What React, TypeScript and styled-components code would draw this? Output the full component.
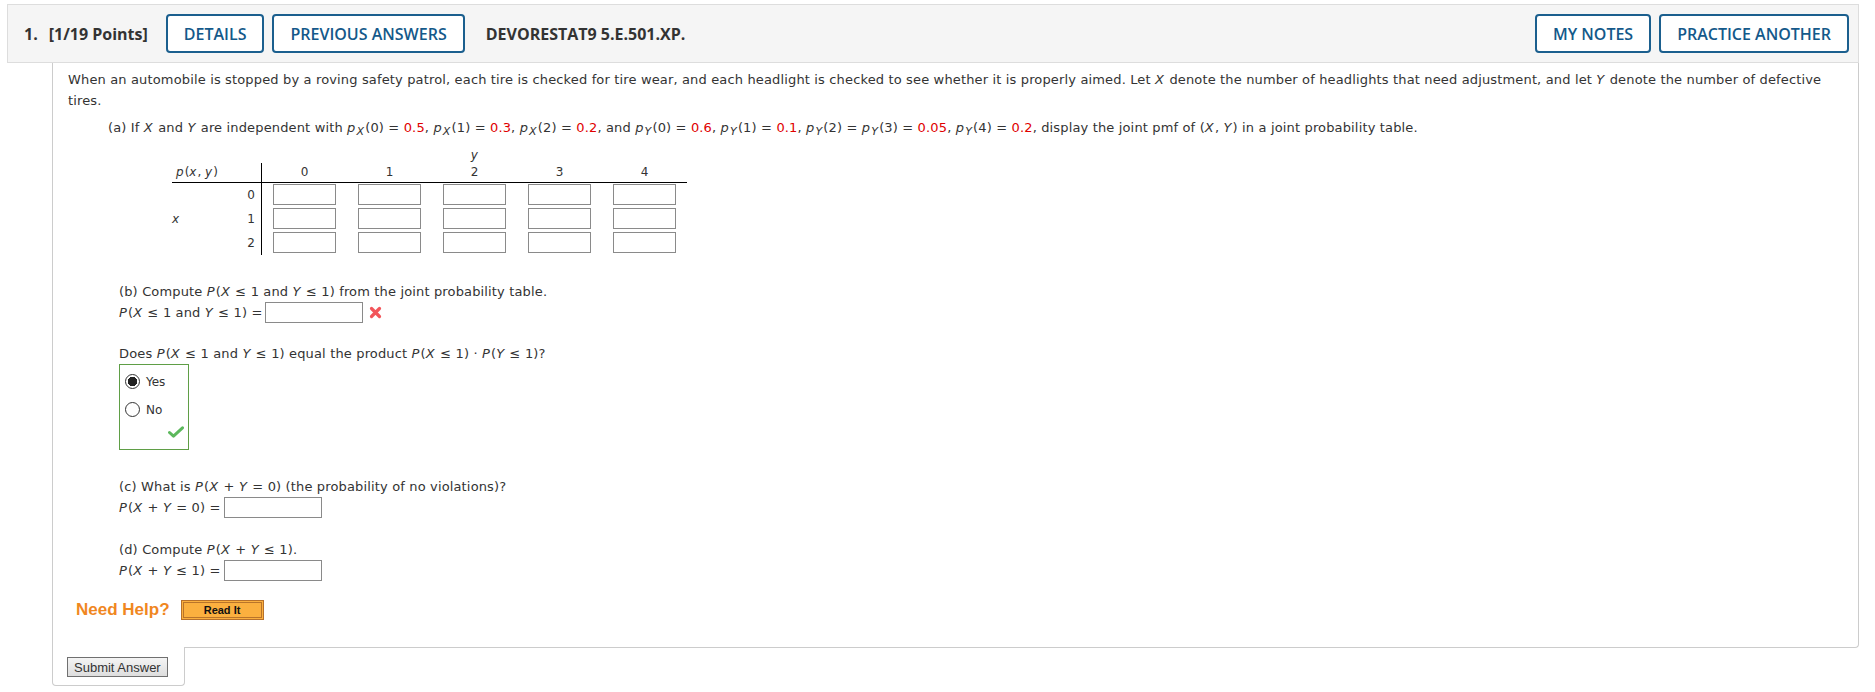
import React from "react";
import styled, { createGlobalStyle } from "styled-components";

const GlobalStyle = createGlobalStyle`
  html, body { margin: 0; padding: 0; background: #fff; }
  body { font-family: "DejaVu Sans", Verdana, sans-serif; color: #333; }
`;

const Page = styled.div`
  padding: 4px 16px 6px 7px;
`;

const Header = styled.div`
  display: flex;
  align-items: center;
  height: 39px;
  padding: 9px 9px 9px 16px;
  border: 1px solid #dddddd;
  background: #f5f5f5;
  font-family: "Open Sans", sans-serif;
  font-size: 16px;
  color: #333;
`;

const QNum = styled.span`
  font-weight: 700;
  margin-right: 11px;
`;

const Points = styled.span`
  font-weight: 700;
  margin-right: 18px;
`;

const HButton = styled.button`
  height: 39px;
  box-sizing: border-box;
  padding: 0 16px;
  margin-right: 8px;
  border: 2px solid #1b5f8e;
  border-radius: 4px;
  background: #fff;
  color: #14598a;
  font-family: "Open Sans", sans-serif;
  font-size: 16px;
  font-weight: 600;
  cursor: pointer;
  &:last-child { margin-right: 0; }
`;

const Code = styled.span`
  font-weight: 700;
  margin-left: 13px;
`;

const Spacer = styled.div`
  flex: 1;
`;

const Panel = styled.div`
  margin-left: 45px;
  border: 1px solid #cccccc;
  border-top: none;
  border-bottom-right-radius: 4px;
  padding: 6px 15px 27px 15px;
  font-size: 13px;
  line-height: 21px;
  letter-spacing: 0.15px;
`;

const Intro = styled.p`
  margin: 0;
`;

const PartA = styled.p`
  margin: 6px 0 0 40px;
`;

const V = styled.i`
  font-style: italic;
  padding-right: 1px;
`;

const Sub = styled.sub`
  font-size: 11px;
  font-style: italic;
  vertical-align: -3px;
  line-height: 0;
  padding-right: 1px;
`;

const Num = styled.span`
  color: #e00000;
`;

const JointTable = styled.table`
  border-collapse: collapse;
  margin: 9px 0 0 104px;
  font-size: 12px;
  line-height: 16px;
  letter-spacing: 0;
`;

const YCell = styled.td`
  text-align: center;
  padding: 0;
  height: 16px;
  font-style: italic;
`;

const CornerCell = styled.th`
  text-align: left;
  font-weight: normal;
  padding: 1px 0 2px 4px;
  border-right: 1px solid #000;
  border-bottom: 1px solid #000;
`;

const ColHead = styled.th`
  width: 85px;
  font-weight: normal;
  text-align: center;
  padding: 1px 0 2px;
  border-bottom: 1px solid #000;
`;

const XLabel = styled.td`
  width: 50px;
  padding: 0;
  font-style: italic;
`;

const RowNum = styled.td`
  width: 33px;
  padding: 0 6px 0 0;
  text-align: right;
  border-right: 1px solid #000;
`;

const Cell = styled.td`
  padding: 1px 0 2px;
  text-align: center;
`;

const CellInput = styled.input.attrs({ type: "text" })`
  display: block;
  width: 63px;
  height: 21px;
  margin: 0 auto;
  box-sizing: border-box;
  border: 1px solid #8a8a8a;
  padding: 0;
`;

const Part = styled.div<{ $top: number }>`
  margin: ${(p) => p.$top}px 0 0 51px;
  line-height: 20px;
`;

const Line = styled.div`
  display: flex;
  align-items: center;
  min-height: 20px;
`;

const AnswerInput = styled.input.attrs({ type: "text" })`
  width: 98px;
  height: 21px;
  box-sizing: border-box;
  border: 1px solid #8a8a8a;
  margin: 0 0 0 3px;
  padding: 0;
`;

const Mark = styled.svg`
  margin-left: 6px;
  flex: none;
`;

const ChoiceBox = styled.div`
  width: 70px;
  height: 86px;
  box-sizing: border-box;
  border: 1px solid #5f9e46;
  padding: 9px 4px 0 5px;
  display: flex;
  flex-direction: column;
  letter-spacing: 0;
`;

const Choice = styled.label`
  display: flex;
  align-items: center;
  height: 15px;
  margin-bottom: 13px;
  font-size: 12px;
`;

const Radio = styled.span<{ $on?: boolean }>`
  width: 15px;
  height: 15px;
  box-sizing: border-box;
  border-radius: 50%;
  border: 1px solid #333;
  background: ${(p) => (p.$on ? "radial-gradient(circle, #222 0 4.5px, #fff 5px)" : "#fff")};
  margin-right: 6px;
  flex: none;
`;

const CheckRow = styled.div`
  display: flex;
  justify-content: flex-end;
  margin-top: -4px;
`;

const HelpRow = styled.div`
  display: flex;
  align-items: center;
  margin: 18px 0 0 8px;
  letter-spacing: 0;
`;

const NeedHelp = styled.span`
  font-family: "Liberation Sans", Arial, sans-serif;
  font-weight: 700;
  font-size: 17px;
  color: #f0871f;
  margin-right: 11px;
`;

const ReadIt = styled.button`
  width: 83px;
  height: 20px;
  box-sizing: border-box;
  border: 1px solid #b8712a;
  background: #fbb03f;
  box-shadow: inset 0 0 0 1px #fbb03f, inset 0 0 0 2px #b9742a;
  font-family: "Liberation Sans", Arial, sans-serif;
  font-weight: 700;
  font-size: 11px;
  color: #111;
  padding: 0;
  cursor: pointer;
`;

const SubmitTab = styled.div`
  width: 133px;
  box-sizing: border-box;
  margin: -1px 0 0 45px;
  border: 1px solid #cccccc;
  border-top: none;
  border-radius: 0 0 4px 4px;
  background: #fff;
  padding: 10px 0 8px 14px;
  position: relative;
`;

const SubmitButton = styled.button`
  height: 20px;
  padding: 0 6px;
  border: 1px solid #707070;
  background: linear-gradient(#f4f4f4, #dedede);
  font-family: "Liberation Sans", Arial, sans-serif;
  font-size: 13px;
  color: #333;
  cursor: pointer;
  display: block;
`;

const RedX = () => (
  <Mark width="13" height="13" viewBox="0 0 13 13">
    <path d="M2.5 2.5 L10.5 10.5 M10.5 2.5 L2.5 10.5" stroke="#f2555a" strokeWidth="3.2" strokeLinecap="round" />
  </Mark>
);

const GreenCheck = () => (
  <svg width="16" height="12" viewBox="0 0 16 12">
    <path d="M1.5 6.5 L5.5 10.2 L14.5 1.8" fill="none" stroke="#5cb85c" strokeWidth="3" strokeLinejoin="round" strokeLinecap="round" />
  </svg>
);

const cols = [0, 1, 2, 3, 4];
const rows = [0, 1, 2];

export default function App() {
  return (
    <>
      <GlobalStyle />
      <Page>
        <Header>
          <QNum>1.</QNum>
          <Points>[1/19 Points]</Points>
          <HButton>DETAILS</HButton>
          <HButton>PREVIOUS ANSWERS</HButton>
          <Code>DEVORESTAT9 5.E.501.XP.</Code>
          <Spacer />
          <HButton>MY NOTES</HButton>
          <HButton>PRACTICE ANOTHER</HButton>
        </Header>
        <Panel>
          <Intro>
            When an automobile is stopped by a roving safety patrol, each tire is checked for tire wear, and each headlight is
            checked to see whether it is properly aimed. Let <V>X</V> denote the number of headlights that need adjustment, and let{" "}
            <V>Y</V> denote the number of defective tires.
          </Intro>
          <PartA>
            (a) If <V>X</V> and <V>Y</V> are independent with <V>p</V>
            <Sub>X</Sub>(0) = <Num>0.5</Num>, <V>p</V>
            <Sub>X</Sub>(1) = <Num>0.3</Num>, <V>p</V>
            <Sub>X</Sub>(2) = <Num>0.2</Num>, and <V>p</V>
            <Sub>Y</Sub>(0) = <Num>0.6</Num>, <V>p</V>
            <Sub>Y</Sub>(1) = <Num>0.1</Num>, <V>p</V>
            <Sub>Y</Sub>(2) = <V>p</V>
            <Sub>Y</Sub>(3) = <Num>0.05</Num>, <V>p</V>
            <Sub>Y</Sub>(4) = <Num>0.2</Num>, display the joint pmf of (<V>X</V>, <V>Y</V>) in a joint probability table.
          </PartA>
          <JointTable>
            <tbody>
              <tr>
                <td colSpan={2} />
                <YCell colSpan={5}>y</YCell>
              </tr>
              <tr>
                <CornerCell colSpan={2}>
                  <V>p</V>(<V>x</V>, <V>y</V>)
                </CornerCell>
                {cols.map((c) => (
                  <ColHead key={c}>{c}</ColHead>
                ))}
              </tr>
              {rows.map((r) => (
                <tr key={r}>
                  <XLabel>{r === 1 ? "x" : ""}</XLabel>
                  <RowNum>{r}</RowNum>
                  {cols.map((c) => (
                    <Cell key={c}>
                      <CellInput aria-label={`p(${r}, ${c})`} />
                    </Cell>
                  ))}
                </tr>
              ))}
            </tbody>
          </JointTable>

          <Part $top={27}>
            <Line>
              (b) Compute&nbsp;<V>P</V>(<V>X</V>&nbsp;≤ 1 and&nbsp;<V>Y</V>&nbsp;≤ 1) from the joint probability table.
            </Line>
            <Line>
              <V>P</V>(<V>X</V>&nbsp;≤ 1 and&nbsp;<V>Y</V>&nbsp;≤ 1) =
              <AnswerInput />
              <RedX />
            </Line>
          </Part>

          <Part $top={21}>
            <Line>
              Does&nbsp;<V>P</V>(<V>X</V>&nbsp;≤ 1 and&nbsp;<V>Y</V>&nbsp;≤ 1) equal the product&nbsp;<V>P</V>(<V>X</V>&nbsp;≤ 1) ·&nbsp;
              <V>P</V>(<V>Y</V>&nbsp;≤ 1)?
            </Line>
            <ChoiceBox>
              <Choice>
                <Radio $on />
                Yes
              </Choice>
              <Choice>
                <Radio />
                No
              </Choice>
              <CheckRow>
                <GreenCheck />
              </CheckRow>
            </ChoiceBox>
          </Part>

          <Part $top={27}>
            <Line>
              (c) What is&nbsp;<V>P</V>(<V>X</V>&nbsp;+&nbsp;<V>Y</V>&nbsp;= 0) (the probability of no violations)?
            </Line>
            <Line>
              <V>P</V>(<V>X</V>&nbsp;+&nbsp;<V>Y</V>&nbsp;= 0) =
              <AnswerInput />
            </Line>
          </Part>

          <Part $top={22}>
            <Line>
              (d) Compute&nbsp;<V>P</V>(<V>X</V>&nbsp;+&nbsp;<V>Y</V>&nbsp;≤ 1).
            </Line>
            <Line>
              <V>P</V>(<V>X</V>&nbsp;+&nbsp;<V>Y</V>&nbsp;≤ 1) =
              <AnswerInput />
            </Line>
          </Part>

          <HelpRow>
            <NeedHelp>Need Help?</NeedHelp>
            <ReadIt>Read It</ReadIt>
          </HelpRow>
        </Panel>
        <SubmitTab>
          <SubmitButton>Submit Answer</SubmitButton>
        </SubmitTab>
      </Page>
    </>
  );
}
